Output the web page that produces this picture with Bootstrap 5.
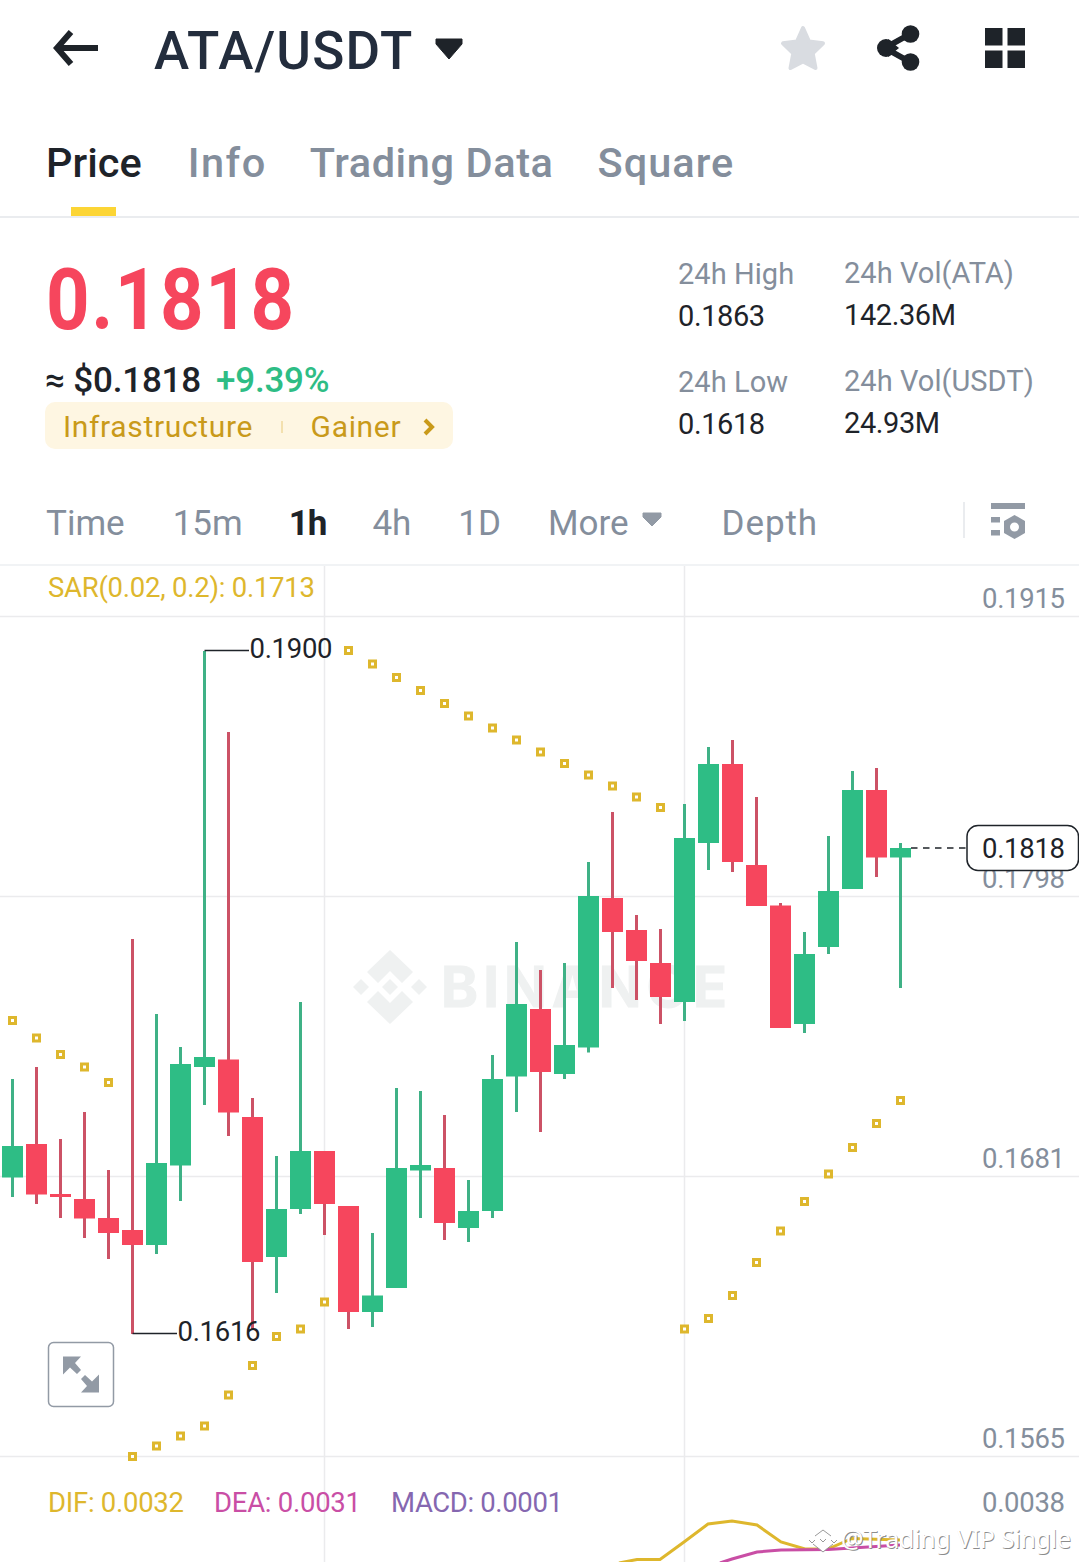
<!DOCTYPE html>
<html lang="en">
<head>
<meta charset="utf-8">
<meta name="viewport" content="width=device-width, initial-scale=1">
<title>ATA/USDT</title>
<link href="https://cdn.jsdelivr.net/npm/bootstrap@5.3.0/dist/css/bootstrap.min.css" rel="stylesheet">
<style>
  :root { --ink:#1e2329; --muted:#848e9c; --up:#2ebd85; --down:#f6465d; --gold:#c99a1a; }
  body { font-family: Roboto, "Noto Sans", sans-serif; color: var(--ink); background:#fff; width:1079px; height:1562px; overflow:hidden; line-height:1; }
  svg { display:block; flex:none; }
  .topbar { height:96px; padding:0 54px 0 53px; }
  .pair { font-size:53px; font-weight:500; color:#232d3d; letter-spacing:1.2px; margin-left:56px; line-height:60px; padding-top:6px; }
  .pair-caret { margin-left:21px; margin-top:2px; }
  .icon-share { margin-left:50px; margin-right:65px; }
  .section-tabs { height:122px; padding:0 46px; border-bottom:2px solid #eaecef; font-size:41.5px; font-weight:500; }
  .section-tabs .nav-link { position:relative; padding:0; height:120px; line-height:134px; font-size:inherit; color:var(--muted); }
  .section-tabs .nav-link.active { color:var(--ink); }
  .section-tabs .nav-link.active::after { content:""; position:absolute; left:25px; width:45px; bottom:0; height:9px; background:#fcd535; }
  .tab-price { margin-right:46px; }
  .tab-info { margin-right:43px; letter-spacing:1.5px; }
  .tab-data { margin-right:44px; letter-spacing:.6px; }
  .tab-square { letter-spacing:1px; }
  .summary { height:262px; padding:0 0 0 45px; }
  .last-price { font-size:85px; font-weight:700; color:var(--down); letter-spacing:1.8px; line-height:86px; margin-top:39px; transform:scaleX(.895); transform-origin:0 0; padding-left:1px; }
  .fiat-line { font-size:35px; font-weight:500; line-height:40px; margin-top:18px; letter-spacing:-.2px; }
  .change-pct { color:var(--up); margin-left:15px; }
  .tag-pill { background:#fef6e2; border-radius:10px; height:47px; width:408px; margin-top:1px; padding:2px 17px 0 18px; color:var(--gold); font-size:30px; letter-spacing:.65px; }
  .tag-rule { width:2px; height:12px; background:#f3e0ae; }
  .tag-pill .tag-next { margin-left:-6px; }
  .stat-col { font-size:29px; }
  .stat-col dt { font-weight:400; color:var(--muted); line-height:42px; letter-spacing:.05px; }
  .stat-col dd { margin:0 0 24px; line-height:42px; letter-spacing:-.4px; }
  .stat-range { width:166px; padding-top:35px; }
  .stat-volume { width:235px; padding-top:34px; }
  .intervals { height:86px; padding:2px 53px 0 46px; border-bottom:2px solid #f1f3f5; color:var(--muted); font-size:35px; }
  .intervals .iv-now { margin:0 46px; font-weight:700; color:var(--ink); letter-spacing:-1px; }
  .bar-rule { width:2px; height:36px; background:#eaecef; margin-bottom:7px; }
  .chart text { font-family: Roboto, sans-serif; font-size:27.5px; }
  .chart .brand-word { font-family: Inter, sans-serif; font-size:56px; font-weight:700; }
  .chart .author-tag { font-family: "Noto Sans", sans-serif; font-size:25px; }
</style>
</head>
<body>
<header class="topbar d-flex align-items-center">
  <svg width="45" height="38" viewBox="0 0 45 38" fill="none" stroke="#1e2329" stroke-width="6"><path d="M45 19H5M18 3 4 19l14 16" /></svg>
  <div class="pair">ATA/USDT</div>
  <svg class="pair-caret" width="28" height="22" viewBox="0 0 28 22"><path d="M1 1h26v5L14 21 1 6z" fill="#1e2329" stroke="#1e2329" stroke-linejoin="round"/></svg>
  <div class="d-flex align-items-center ms-auto">
    <svg width="46" height="48" viewBox="0 0 46 48"><path d="m23 4 6 13.500 14 1.800-10.300 10 2.800 14.700L23 37.500 10.500 44l2.800-14.700L3 19.300l14-1.800z" fill="#d9dce1" stroke="#d9dce1" stroke-width="4" stroke-linejoin="round"/></svg>
    <svg class="icon-share" width="44" height="46" viewBox="0 0 44 46" fill="#1e2329"><path d="M34 9 9 23l25 14" fill="none" stroke="#1e2329" stroke-width="6"/><path d="M12 14l11 9-11 9z"/><circle cx="10" cy="23" r="9"/><circle cx="34.500" cy="9" r="8.800"/><circle cx="34.500" cy="37" r="8.800"/></svg>
    <svg width="40" height="40" viewBox="0 0 40 40" fill="#1e2329"><path d="M0 0h17.500v17.500H0zM22.500 0H40v17.500H22.500zM0 22.500h17.500V40H0zM22.500 22.500H40V40H22.500z"/></svg>
  </div>
</header>

<nav class="section-tabs nav flex-nowrap">
  <a class="nav-link active tab-price">Price</a>
  <a class="nav-link tab-info">Info</a>
  <a class="nav-link tab-data">Trading Data</a>
  <a class="nav-link tab-square">Square</a>
</nav>

<section class="summary d-flex">
  <div class="flex-grow-1">
    <div class="last-price">0.1818</div>
    <div class="fiat-line d-flex"><span>≈ $0.1818</span><span class="change-pct">+9.39%</span></div>
    <div class="tag-pill d-flex align-items-center justify-content-between">
      <span>Infrastructure</span><span class="tag-rule"></span><span>Gainer</span>
      <svg class="tag-next" width="13" height="18" viewBox="0 0 13 18" fill="none" stroke="#c99a1a" stroke-width="4"><path d="m2 2 7 7-7 7"/></svg>
    </div>
  </div>
  <dl class="stat-col stat-range m-0"><dt>24h High</dt><dd>0.1863</dd><dt>24h Low</dt><dd>0.1618</dd></dl>
  <dl class="stat-col stat-volume m-0"><dt>24h Vol(ATA)</dt><dd>142.36M</dd><dt>24h Vol(USDT)</dt><dd>24.93M</dd></dl>
</section>

<section class="intervals d-flex align-items-center">
  <span>Time</span><span style="margin-left:48px">15m</span><span class="iv-now">1h</span><span>4h</span><span style="margin-left:47px">1D</span><span style="margin-left:47px">More</span>
  <svg style="margin-left:13px;margin-bottom:8px" width="20" height="15" viewBox="0 0 20 15"><path d="M1 1h18v4l-9 9-9-9z" fill="#929aa5" stroke="#929aa5" stroke-linejoin="round"/></svg>
  <span style="margin-left:60px;letter-spacing:.9px">Depth</span>
  <span class="bar-rule ms-auto"></span>
  <svg style="margin-left:25px;margin-bottom:5px" width="36" height="36" viewBox="0 0 36 36" fill="#929aa5"><path d="M1 0h34v6H1zM1 14h9v5.500H1zM1 27h9v5.500H1z"/><path fill-rule="evenodd" d="m24.500 12 10.500 6v12l-10.500 6L14 30V18zm0 7.500a4.500 4.500 0 1 0 0 9 4.500 4.500 0 0 0 0-9z"/></svg>
</section>

<svg class="chart" id="chart" width="1079" height="996" viewBox="0 566 1079 996">
  <path d="M0 616.500H1079M0 896.500H1079M0 1176.500H1079M0 1456.500H1079M324.500 566V1562M684.500 566V1562" stroke="#ebebed" stroke-width="1.500"/>
  <g fill="#eff1f1">
    <path d="m390 950 23 22-11 11-12-12-12 12-11-11zM390 1024l23-22-11-11-12 12-12-12-11 11zM361 979l8 8-8 8-8-8zM419 979l8 8-8 8-8-8zM390 979l8 8-8 8-8-8z"/>
    <text class="brand-word" x="441" y="1007" textLength="286" stroke="#eff1f1">BINANCE</text>
  </g>
  <g id="candles"></g>
  <g id="sar" fill="#fff" stroke="#deb72d" stroke-width="3"></g>
  <path d="M204.500 650.500H249M132.500 1333.500H177" stroke="#1e2329" stroke-width="1.500"/>
  <text x="249.500" y="658" textLength="83" fill="#1e2329">0.1900</text>
  <text x="177.500" y="1341" textLength="83" fill="#1e2329">0.1616</text>
  <text x="48" y="597" textLength="267" fill="#deb72d">SAR(0.02, 0.2): 0.1713</text>
  <g fill="#848e9c">
    <text x="982" y="608" textLength="83">0.1915</text>
    <text x="982" y="888" textLength="83">0.1798</text>
    <text x="982" y="1168" textLength="83">0.1681</text>
    <text x="982" y="1448" textLength="83">0.1565</text>
    <text x="982" y="1512" textLength="83">0.0038</text>
  </g>
  <path d="M911 848H966" stroke="#1e2329" stroke-width="1.600" stroke-dasharray="6.500 5.500"/>
  <rect x="967" y="825.500" width="111.500" height="45" rx="11" fill="#fff" stroke="#1e2329" stroke-width="1.500"/>
  <text x="982" y="858" textLength="83" fill="#1e2329">0.1818</text>

  <rect x="48.500" y="1342.500" width="65" height="64" rx="5" fill="#fff" stroke="#929aa5" stroke-width="1.500"/>
  <path d="M63 1356.500h18l-6 6.500 6 7-4 4-7-6.500-7 7zM99 1392.500H81l6-6.500-6-7 4-4 7 6.500 7-7z" fill="#929aa5"/>

  <text x="48" y="1512" textLength="136" fill="#deb72d">DIF: 0.0032</text>
  <text x="214" y="1512" textLength="147" fill="#c94ea5">DEA: 0.0031</text>
  <text x="391" y="1512" textLength="172" fill="#8567b0">MACD: 0.0001</text>
  <g fill="none" stroke-width="3">
    <path d="M619 1563 637 1559.500H660L684 1542 708 1524 732 1521 757 1525 781 1542 805 1549H828L852 1538.500 900 1540" stroke="#deb72d"/>
    <path d="M720 1563 732 1559 757 1552 781 1550 828 1549.500 900 1545" stroke="#c94ea5"/>
  </g>
  <path d="m815 1537 8-7 8 7-3 3-5-4-5 4zM810 1540l3 3 10 9 10-9 3-3-5-1-8 6-8-6zM820 1539l3-3 3 3-3 3z" fill="#fff"/>
  <path d="m815 1536 8-6 8 6M809 1540l3 3 3-3M831 1540l3 3 3-3M820 1539l3 3 3-3M813 1544l10 8 10-8" fill="none" stroke="#999"/>
  <text class="author-tag" x="841.900" y="1549" textLength="230" fill="#8c8c8c">@Trading VIP Single</text>
  <text class="author-tag" x="841" y="1548" textLength="230" fill="#fff">@Trading VIP Single</text>
</svg>

<script>
  // [direction, high, body top, body bottom, low], one per hour, 24px apart
  const candles = [
    [1,1079,1146,1177.5,1197],[0,1067,1144,1194.5,1204],[0,1139,1194,1197,1218],[0,1112,1199,1218.5,1238],
    [0,1170,1218,1233,1259],[0,939,1230,1245,1334],[1,1014,1163,1245,1254],[1,1047,1064,1165.5,1201],
    [1,651,1057,1067,1105],[0,732,1059.5,1112.5,1136],[0,1098,1117,1262,1330],[1,1156,1209,1257,1293],
    [1,1002,1151,1209,1214],[0,1151,1151,1204,1235],[0,1206,1206,1312,1329],[1,1233,1295.5,1312,1327],
    [1,1088,1168,1288,1288],[1,1091,1165,1170.5,1218],[0,1115,1168,1223,1240],[1,1180,1211,1228,1242],
    [1,1055,1079,1211,1218],[1,942,1004,1076.5,1112],[0,970,1009,1072,1132],[1,963,1045,1074,1079],
    [1,862,896,1047.5,1052.5],[0,812,898,932,988],[0,915,930,961,1000],[0,929,963,997,1024],
    [1,804,838,1002,1021],[1,747,764,843,870],[0,740,764,862,872],[0,797,865,906,906],
    [0,903,905.5,1028,1028],[1,932,954,1024,1033],[1,836,891,947,954],[1,771,790,889,889],
    [0,768,790,857.5,877],[1,843,848,857.5,988]
  ];
  document.getElementById('candles').innerHTML = candles.map(([up,h,t,b,l],i) => {
    const x = 12.5 + i*24;
    return `<rect x="${x-1.5}" y="${h}" width="3" height="${l-h}" fill="${up?'#3fb186':'#cc5266'}"/>` +
           `<rect x="${x-10.5}" y="${t}" width="21" height="${b-t}" fill="${up?'#2ebd85':'#f6465d'}"/>`;
  }).join('');
  // Parabolic SAR runs: first candle index, then marker heights
  const sar = [
    [0,1020.5,1038,1054.5,1067,1082.5],
    [5,1456.5,1446,1436,1426,1395,1365.5,1336.5,1329,1302],
    [14,650.5,664,677.5,690.5,703.5,716,728,740,752,763.5,775,786,797,807.5],
    [28,1329,1318.5,1295.5,1262.5,1231,1201.5,1174,1147.5,1123.5,1100.5]
  ];
  document.getElementById('sar').innerHTML = sar.map(([s,...ys]) =>
    ys.map((y,i) => `<rect x="${12.5+(s+i)*24-3}" y="${y-3}" width="6" height="6"/>`).join('')).join('');
</script>
<script src="https://cdn.jsdelivr.net/npm/bootstrap@5.3.0/dist/js/bootstrap.bundle.min.js"></script>
</body>
</html>
